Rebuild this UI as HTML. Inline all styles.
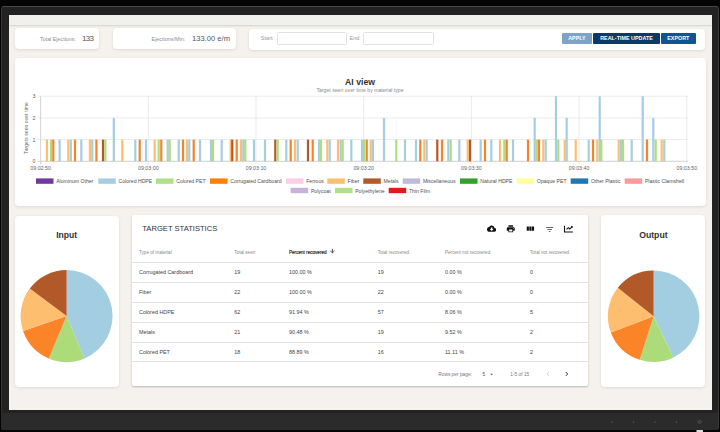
<!DOCTYPE html>
<html><head><meta charset="utf-8"><style>
html,body{margin:0;padding:0}
body{width:720px;height:432px;background:#050505;position:relative;overflow:hidden;font-family:"Liberation Sans",sans-serif}
.a{position:absolute}
.card{position:absolute;background:#fff;border-radius:4px;box-shadow:0 1px 3px rgba(60,50,40,.12)}
.t{position:absolute;white-space:nowrap;line-height:1}
.td{font-size:5.4px;color:#444}
.th{font-size:4.6px;color:#8a8a8a}
.th.act{color:#222;-webkit-text-stroke:0.15px #222}
.sep{position:absolute;left:131.5px;width:456px;height:0.7px;background:#e2e2e2}
svg text{font-family:"Liberation Sans",sans-serif}
</style></head><body>
<div class="a" style="left:0.8px;top:6.2px;width:718.2px;height:424px;background:#222;border-radius:3px;border-top:1.1px solid #4a4a4a;border-right:0.8px solid #3a3a3a;border-left:0.8px solid #333;box-sizing:border-box"></div>
<div class="a" style="left:1px;top:412.5px;width:717px;height:17.5px;background:#2b2b2b;border-radius:0 0 2px 2px"></div>
<div class="a" style="left:9px;top:14.6px;width:703px;height:395.6px;background:#f5f2ee"></div>
<div class="a" style="left:9px;top:14.6px;width:703px;height:10.6px;background:#f0f1ed;box-shadow:0 1.2px 2.2px rgba(0,0,0,.24)"></div>

<div class="card" style="left:15px;top:28px;width:84px;height:21px"></div>
<div class="t" style="left:40px;top:36.5px;font-size:5.35px;color:#8d8d8d">Total Ejections:</div>
<div class="t" style="left:82px;top:35.1px;font-size:8px;color:#555;letter-spacing:-0.75px">133</div>

<div class="card" style="left:112.7px;top:28px;width:123.5px;height:21px"></div>
<div class="t" style="left:151.5px;top:36.5px;font-size:5.45px;color:#8d8d8d">Ejections/Min:</div>
<div class="t" style="left:192px;top:35.3px;font-size:7.6px;color:#555">133.00 e/m</div>

<div class="card" style="left:249px;top:28.5px;width:455.7px;height:21px"></div>
<div class="t" style="left:260.8px;top:36.4px;font-size:5.6px;color:#9a9a9a">Start</div>
<div class="a" style="left:276.7px;top:32.2px;width:70px;height:12.6px;border:0.6px solid #e2e2e2;border-radius:1.5px;box-sizing:border-box"></div>
<div class="t" style="left:349.5px;top:36.4px;font-size:5.6px;color:#9a9a9a">End</div>
<div class="a" style="left:363px;top:32.2px;width:71px;height:12.6px;border:0.6px solid #e2e2e2;border-radius:1.5px;box-sizing:border-box"></div>
<div class="a" style="left:561.8px;top:33px;width:30.2px;height:10.6px;background:#7ca4c7;border-radius:1px"></div>
<div class="a" style="left:593px;top:33px;width:67px;height:10.6px;background:#0b3a66;border-radius:1px"></div>
<div class="a" style="left:661px;top:33px;width:34.7px;height:10.6px;background:#0f5594;border-radius:1px"></div>
<div class="t" style="left:561.8px;width:30.2px;text-align:center;top:35.6px;font-size:5.3px;color:#fff;font-weight:bold">APPLY</div>
<div class="t" style="left:593px;width:67px;text-align:center;top:35.6px;font-size:5.4px;color:#fff;font-weight:bold">REAL-TIME UPDATE</div>
<div class="t" style="left:661px;width:34.7px;text-align:center;top:35.6px;font-size:5.4px;color:#fff;font-weight:bold">EXPORT</div>

<div class="card" style="left:14.7px;top:57.5px;width:691.3px;height:148.5px"></div>
<div class="t" style="left:300px;width:120px;text-align:center;top:77.6px;font-size:8.7px;font-weight:bold;color:#333">AI view</div>
<div class="t" style="left:300px;width:120px;text-align:center;top:87.6px;font-size:5.15px;color:#8a8a8a">Target seen over time by material type</div>
<div class="t" style="left:26.6px;top:128.3px;font-size:5.13px;color:#666;transform:translate(-50%,-50%) rotate(-90deg)">Targets seen over time</div>
<svg class="a" style="left:0;top:0" width="720" height="432" viewBox="0 0 720 432">
<line x1="37.5" y1="161.30" x2="688" y2="161.30" stroke="#e3e3e3" stroke-width="0.7"/><line x1="37.5" y1="139.60" x2="688" y2="139.60" stroke="#e3e3e3" stroke-width="0.7"/><line x1="37.5" y1="117.90" x2="688" y2="117.90" stroke="#e3e3e3" stroke-width="0.7"/><line x1="37.5" y1="96.20" x2="688" y2="96.20" stroke="#e3e3e3" stroke-width="0.7"/><line x1="40.60" y1="96.20" x2="40.60" y2="164.30" stroke="#e3e3e3" stroke-width="0.7"/><line x1="148.30" y1="96.20" x2="148.30" y2="164.30" stroke="#e3e3e3" stroke-width="0.7"/><line x1="256.00" y1="96.20" x2="256.00" y2="164.30" stroke="#e3e3e3" stroke-width="0.7"/><line x1="363.70" y1="96.20" x2="363.70" y2="164.30" stroke="#e3e3e3" stroke-width="0.7"/><line x1="471.40" y1="96.20" x2="471.40" y2="164.30" stroke="#e3e3e3" stroke-width="0.7"/><line x1="579.10" y1="96.20" x2="579.10" y2="164.30" stroke="#e3e3e3" stroke-width="0.7"/><line x1="686.80" y1="96.20" x2="686.80" y2="164.30" stroke="#e3e3e3" stroke-width="0.7"/><line x1="40.6" y1="96.20" x2="40.6" y2="163.80" stroke="#cfcfcf" stroke-width="0.8"/><line x1="37.5" y1="161.3" x2="688" y2="161.3" stroke="#cfcfcf" stroke-width="0.8"/><rect x="45.80" y="139.60" width="2.2" height="21.70" fill="#fdbf6f"/><rect x="49.90" y="139.60" width="2.2" height="21.70" fill="#aedd80"/><rect x="52.20" y="139.60" width="2.2" height="21.70" fill="#f6832c"/><rect x="58.50" y="139.60" width="2.2" height="21.70" fill="#a6cee3"/><rect x="67.20" y="139.60" width="2.2" height="21.70" fill="#fdbf6f"/><rect x="69.70" y="139.60" width="2.2" height="21.70" fill="#a6cee3"/><rect x="73.90" y="139.60" width="2.2" height="21.70" fill="#f6832c"/><rect x="80.20" y="139.60" width="2.2" height="21.70" fill="#a6cee3"/><rect x="88.80" y="139.60" width="2.2" height="21.70" fill="#fdbf6f"/><rect x="91.20" y="139.60" width="2.2" height="21.70" fill="#a6cee3"/><rect x="95.30" y="139.60" width="2.2" height="21.70" fill="#f6832c"/><rect x="101.90" y="139.60" width="2.2" height="21.70" fill="#b15928"/><rect x="104.20" y="139.60" width="2.2" height="21.70" fill="#aedd80"/><rect x="112.70" y="117.90" width="2.2" height="43.40" fill="#a6cee3"/><rect x="121.20" y="139.60" width="2.2" height="21.70" fill="#fdbf6f"/><rect x="134.20" y="139.60" width="2.2" height="21.70" fill="#a6cee3"/><rect x="138.60" y="139.60" width="2.2" height="21.70" fill="#f6832c"/><rect x="144.90" y="139.60" width="2.2" height="21.70" fill="#a6cee3"/><rect x="153.60" y="139.60" width="2.2" height="21.70" fill="#fdbf6f"/><rect x="157.60" y="139.60" width="2.2" height="21.70" fill="#aedd80"/><rect x="160.20" y="139.60" width="2.2" height="21.70" fill="#f6832c"/><rect x="166.60" y="139.60" width="2.2" height="21.70" fill="#a6cee3"/><rect x="168.60" y="139.60" width="2.2" height="21.70" fill="#aedd80"/><rect x="177.60" y="139.60" width="2.2" height="21.70" fill="#a6cee3"/><rect x="181.90" y="139.60" width="2.2" height="21.70" fill="#f6832c"/><rect x="185.90" y="139.60" width="2.2" height="21.70" fill="#fdbf6f"/><rect x="188.20" y="139.60" width="2.2" height="21.70" fill="#a6cee3"/><rect x="192.60" y="139.60" width="2.2" height="21.70" fill="#f6832c"/><rect x="198.90" y="139.60" width="2.2" height="21.70" fill="#a6cee3"/><rect x="209.90" y="139.60" width="2.2" height="21.70" fill="#a6cee3"/><rect x="211.90" y="139.60" width="2.2" height="21.70" fill="#aedd80"/><rect x="220.60" y="139.60" width="2.2" height="21.70" fill="#a6cee3"/><rect x="229.60" y="139.60" width="2.2" height="21.70" fill="#fdbf6f"/><rect x="231.20" y="139.60" width="2.2" height="21.70" fill="#b15928"/><rect x="235.60" y="139.60" width="2.2" height="21.70" fill="#f6832c"/><rect x="239.90" y="139.60" width="2.2" height="21.70" fill="#fdbf6f"/><rect x="242.20" y="139.60" width="2.2" height="21.70" fill="#a6cee3"/><rect x="244.20" y="139.60" width="2.2" height="21.70" fill="#aedd80"/><rect x="252.90" y="139.60" width="2.2" height="21.70" fill="#a6cee3"/><rect x="263.90" y="139.60" width="2.2" height="21.70" fill="#a6cee3"/><rect x="274.20" y="139.60" width="2.2" height="21.70" fill="#b15928"/><rect x="276.60" y="139.60" width="2.2" height="21.70" fill="#aedd80"/><rect x="285.20" y="139.60" width="2.2" height="21.70" fill="#a6cee3"/><rect x="289.60" y="139.60" width="2.2" height="21.70" fill="#f6832c"/><rect x="293.90" y="139.60" width="2.2" height="21.70" fill="#fdbf6f"/><rect x="296.60" y="139.60" width="2.2" height="21.70" fill="#a6cee3"/><rect x="306.90" y="139.60" width="2.2" height="21.70" fill="#b15928"/><rect x="311.60" y="139.60" width="2.2" height="21.70" fill="#f6832c"/><rect x="317.90" y="139.60" width="2.2" height="21.70" fill="#a6cee3"/><rect x="319.90" y="139.60" width="2.2" height="21.70" fill="#aedd80"/><rect x="326.20" y="139.60" width="2.2" height="21.70" fill="#fdbf6f"/><rect x="328.60" y="139.60" width="2.2" height="21.70" fill="#a6cee3"/><rect x="336.90" y="139.60" width="2.2" height="21.70" fill="#fdbf6f"/><rect x="339.60" y="139.60" width="2.2" height="21.70" fill="#a6cee3"/><rect x="341.60" y="139.60" width="2.2" height="21.70" fill="#aedd80"/><rect x="350.20" y="139.60" width="2.2" height="21.70" fill="#a6cee3"/><rect x="360.90" y="139.60" width="2.2" height="21.70" fill="#a6cee3"/><rect x="362.90" y="139.60" width="2.2" height="21.70" fill="#aedd80"/><rect x="365.60" y="139.60" width="2.2" height="21.70" fill="#f6832c"/><rect x="369.60" y="139.60" width="2.2" height="21.70" fill="#fdbf6f"/><rect x="371.90" y="139.60" width="2.2" height="21.70" fill="#a6cee3"/><rect x="382.90" y="117.90" width="2.2" height="43.40" fill="#a6cee3"/><rect x="395.20" y="139.60" width="2.2" height="21.70" fill="#aedd80"/><rect x="403.90" y="139.60" width="2.2" height="21.70" fill="#a6cee3"/><rect x="414.90" y="139.60" width="2.2" height="21.70" fill="#a6cee3"/><rect x="419.20" y="139.60" width="2.2" height="21.70" fill="#f6832c"/><rect x="423.20" y="139.60" width="2.2" height="21.70" fill="#fdbf6f"/><rect x="425.60" y="139.60" width="2.2" height="21.70" fill="#a6cee3"/><rect x="436.20" y="139.60" width="2.2" height="21.70" fill="#b15928"/><rect x="440.90" y="139.60" width="2.2" height="21.70" fill="#f6832c"/><rect x="447.20" y="139.60" width="2.2" height="21.70" fill="#a6cee3"/><rect x="449.60" y="139.60" width="2.2" height="21.70" fill="#aedd80"/><rect x="458.20" y="139.60" width="2.2" height="21.70" fill="#a6cee3"/><rect x="466.60" y="139.60" width="2.2" height="21.70" fill="#fdbf6f"/><rect x="468.90" y="139.60" width="2.2" height="21.70" fill="#b15928"/><rect x="479.60" y="139.60" width="2.2" height="21.70" fill="#a6cee3"/><rect x="483.90" y="139.60" width="2.2" height="21.70" fill="#f6832c"/><rect x="490.20" y="139.60" width="2.2" height="21.70" fill="#a6cee3"/><rect x="498.90" y="139.60" width="2.2" height="21.70" fill="#fdbf6f"/><rect x="503.20" y="139.60" width="2.2" height="21.70" fill="#aedd80"/><rect x="505.60" y="139.60" width="2.2" height="21.70" fill="#f6832c"/><rect x="511.90" y="139.60" width="2.2" height="21.70" fill="#a6cee3"/><rect x="526.90" y="139.60" width="2.2" height="21.70" fill="#f6832c"/><rect x="533.60" y="117.90" width="2.2" height="43.40" fill="#a6cee3"/><rect x="535.60" y="139.60" width="2.2" height="21.70" fill="#aedd80"/><rect x="537.90" y="139.60" width="2.2" height="21.70" fill="#f6832c"/><rect x="542.20" y="139.60" width="2.2" height="21.70" fill="#fdbf6f"/><rect x="544.60" y="139.60" width="2.2" height="21.70" fill="#a6cee3"/><rect x="554.90" y="96.20" width="2.2" height="65.10" fill="#a6cee3"/><rect x="557.20" y="139.60" width="2.2" height="21.70" fill="#aedd80"/><rect x="563.60" y="139.60" width="2.2" height="21.70" fill="#fdbf6f"/><rect x="565.60" y="117.90" width="2.2" height="43.40" fill="#a6cee3"/><rect x="574.60" y="139.60" width="2.2" height="21.70" fill="#fdbf6f"/><rect x="587.60" y="139.60" width="2.2" height="21.70" fill="#a6cee3"/><rect x="591.90" y="139.60" width="2.2" height="21.70" fill="#f6832c"/><rect x="596.20" y="139.60" width="2.2" height="21.70" fill="#fdbf6f"/><rect x="598.60" y="96.20" width="2.2" height="65.10" fill="#a6cee3"/><rect x="600.20" y="139.60" width="2.2" height="21.70" fill="#aedd80"/><rect x="617.60" y="139.60" width="2.2" height="21.70" fill="#fdbf6f"/><rect x="619.90" y="139.60" width="2.2" height="21.70" fill="#a6cee3"/><rect x="621.90" y="139.60" width="2.2" height="21.70" fill="#aedd80"/><rect x="630.60" y="139.60" width="2.2" height="21.70" fill="#a6cee3"/><rect x="641.60" y="96.20" width="2.2" height="65.10" fill="#a6cee3"/><rect x="645.90" y="139.60" width="2.2" height="21.70" fill="#f6832c"/><rect x="652.20" y="117.90" width="2.2" height="43.40" fill="#a6cee3"/><rect x="654.60" y="139.60" width="2.2" height="21.70" fill="#aedd80"/><rect x="660.60" y="139.60" width="2.2" height="21.70" fill="#fdbf6f"/><rect x="663.20" y="139.60" width="2.2" height="21.70" fill="#a6cee3"/>
<g font-size="5.3" fill="#666"><text x="35.5" y="163.20" text-anchor="end">0</text><text x="35.5" y="141.50" text-anchor="end">1</text><text x="35.5" y="119.80" text-anchor="end">2</text><text x="35.5" y="98.10" text-anchor="end">3</text><text x="40.60" y="170" text-anchor="middle">09:02:50</text><text x="148.30" y="170" text-anchor="middle">09:03:00</text><text x="256.00" y="170" text-anchor="middle">09:03:10</text><text x="363.70" y="170" text-anchor="middle">09:03:20</text><text x="471.40" y="170" text-anchor="middle">09:03:30</text><text x="579.10" y="170" text-anchor="middle">09:03:40</text><text x="686.80" y="170" text-anchor="middle">09:03:50</text></g>
<g font-size="5.15" fill="#4f4f4f"><rect x="36" y="178.4" width="17.5" height="5.4" fill="#7039a0"/><text x="56.20" y="183.10">Aluminum Other</text><rect x="98.3" y="178.4" width="17.5" height="5.4" fill="#a6cee3"/><text x="118.50" y="183.10">Colored HDPE</text><rect x="156" y="178.4" width="17.5" height="5.4" fill="#b2df8a"/><text x="176.20" y="183.10">Colored PET</text><rect x="210" y="178.4" width="17.5" height="5.4" fill="#ff7f00"/><text x="230.20" y="183.10">Corrugated Cardboard</text><rect x="286" y="178.4" width="17.5" height="5.4" fill="#fccde5"/><text x="306.20" y="183.10">Ferrous</text><rect x="327.3" y="178.4" width="17.5" height="5.4" fill="#fdbf6f"/><text x="347.50" y="183.10">Fiber</text><rect x="363.3" y="178.4" width="17.5" height="5.4" fill="#b15928"/><text x="383.50" y="183.10">Metals</text><rect x="402.7" y="178.4" width="17.5" height="5.4" fill="#bebada"/><text x="422.90" y="183.10">Miscellaneous</text><rect x="460" y="178.4" width="17.5" height="5.4" fill="#33a02c"/><text x="480.20" y="183.10">Natural HDPE</text><rect x="516.7" y="178.4" width="17.5" height="5.4" fill="#ffff99"/><text x="536.90" y="183.10">Opaque PET</text><rect x="570.7" y="178.4" width="17.5" height="5.4" fill="#1f78b4"/><text x="590.90" y="183.10">Other Plastic</text><rect x="624.7" y="178.4" width="17.5" height="5.4" fill="#fb9a99"/><text x="644.90" y="183.10">Plastic Clamshell</text><rect x="290.7" y="187.8" width="17.5" height="5.4" fill="#cab2d6"/><text x="310.90" y="192.50">Polycoat</text><rect x="335" y="187.8" width="17.5" height="5.4" fill="#b2df8a"/><text x="355.20" y="192.50">Polyethylene</text><rect x="388.7" y="187.8" width="17.5" height="5.4" fill="#e31a1c"/><text x="408.90" y="192.50">Thin Film</text></g>
</svg>

<div class="card" style="left:14.7px;top:215.5px;width:104px;height:171px"></div>
<div class="t" style="left:14.7px;width:104px;text-align:center;top:230.5px;font-size:8.6px;font-weight:bold;color:#333">Input</div>
<div class="card" style="left:601.4px;top:215px;width:104px;height:172.3px"></div>
<div class="t" style="left:601.4px;width:104px;text-align:center;top:230.9px;font-size:8.7px;font-weight:bold;color:#333">Output</div>
<svg class="a" style="left:0;top:0" width="720" height="432"><path d="M66.6,316 L66.60,270.00 A46,46 0 0 1 84.44,358.40 Z" fill="#a3cde1"/><path d="M66.6,316 L84.44,358.40 A46,46 0 0 1 48.76,358.40 Z" fill="#acdc7a"/><path d="M66.6,316 L48.76,358.40 A46,46 0 0 1 23.11,330.99 Z" fill="#fb8429"/><path d="M66.6,316 L23.11,330.99 A46,46 0 0 1 29.75,288.47 Z" fill="#fdbf6f"/><path d="M66.6,316 L29.75,288.47 A46,46 0 0 1 66.60,270.00 Z" fill="#b15928"/><path d="M653.6,316.2 L653.60,270.40 A45.8,45.8 0 0 1 673.47,357.46 Z" fill="#a3cde1"/><path d="M653.6,316.2 L673.47,357.46 A45.8,45.8 0 0 1 639.76,359.86 Z" fill="#acdc7a"/><path d="M653.6,316.2 L639.76,359.86 A45.8,45.8 0 0 1 610.84,332.60 Z" fill="#fb8429"/><path d="M653.6,316.2 L610.84,332.60 A45.8,45.8 0 0 1 617.79,287.64 Z" fill="#fdbf6f"/><path d="M653.6,316.2 L617.79,287.64 A45.8,45.8 0 0 1 653.60,270.40 Z" fill="#b15928"/></svg>

<div class="a" style="left:131.5px;top:215px;width:456px;height:170.7px;background:#fff;border-radius:2px;box-shadow:0 1px 2px rgba(0,0,0,.25)"></div>
<div class="t" style="left:142.3px;top:225px;font-size:7.6px;color:#333">TARGET STATISTICS</div>
<div class="t th" style="left:139px;top:251.4px">Type of material</div><div class="t th" style="left:234.3px;top:251.4px">Total seen</div><div class="t th act" style="left:289px;top:251.4px">Percent recovered</div><div class="t th" style="left:377.7px;top:251.4px">Total recovered</div><div class="t th" style="left:445px;top:251.4px">Percent not recovered</div><div class="t th" style="left:530px;top:251.4px">Total not recovered</div>
<div class="sep" style="top:262.30px"></div><div class="sep" style="top:282.10px"></div><div class="sep" style="top:301.90px"></div><div class="sep" style="top:321.70px"></div><div class="sep" style="top:341.50px"></div><div class="sep" style="top:361.30px"></div>
<div class="t td" style="left:139px;top:270.00px">Corrugated Cardboard</div><div class="t td" style="left:234.3px;top:270.00px">19</div><div class="t td" style="left:289px;top:270.00px">100.00 %</div><div class="t td" style="left:377.7px;top:270.00px">19</div><div class="t td" style="left:445px;top:270.00px">0.00 %</div><div class="t td" style="left:530px;top:270.00px">0</div><div class="t td" style="left:139px;top:289.90px">Fiber</div><div class="t td" style="left:234.3px;top:289.90px">22</div><div class="t td" style="left:289px;top:289.90px">100.00 %</div><div class="t td" style="left:377.7px;top:289.90px">22</div><div class="t td" style="left:445px;top:289.90px">0.00 %</div><div class="t td" style="left:530px;top:289.90px">0</div><div class="t td" style="left:139px;top:309.80px">Colored HDPE</div><div class="t td" style="left:234.3px;top:309.80px">62</div><div class="t td" style="left:289px;top:309.80px">91.94 %</div><div class="t td" style="left:377.7px;top:309.80px">57</div><div class="t td" style="left:445px;top:309.80px">8.06 %</div><div class="t td" style="left:530px;top:309.80px">5</div><div class="t td" style="left:139px;top:329.70px">Metals</div><div class="t td" style="left:234.3px;top:329.70px">21</div><div class="t td" style="left:289px;top:329.70px">90.48 %</div><div class="t td" style="left:377.7px;top:329.70px">19</div><div class="t td" style="left:445px;top:329.70px">9.52 %</div><div class="t td" style="left:530px;top:329.70px">2</div><div class="t td" style="left:139px;top:349.60px">Colored PET</div><div class="t td" style="left:234.3px;top:349.60px">18</div><div class="t td" style="left:289px;top:349.60px">88.89 %</div><div class="t td" style="left:377.7px;top:349.60px">16</div><div class="t td" style="left:445px;top:349.60px">11.11 %</div><div class="t td" style="left:530px;top:349.60px">2</div>
<div class="t" style="left:438.3px;top:373.1px;font-size:4.8px;color:#777">Rows per page:</div>
<div class="t" style="left:482.6px;top:373.1px;font-size:4.8px;color:#555">5</div>
<div class="t" style="left:510.3px;top:373.1px;font-size:4.8px;color:#777">1-5 of 15</div>

<svg class="a" style="left:486.7px;top:224.15px" width="9.3" height="9.3" viewBox="0 0 24 24"><path fill="#111" d="M19.35 10.04C18.67 6.59 15.64 4 12 4 9.11 4 6.6 5.64 5.35 8.04 2.34 8.36 0 10.91 0 14c0 3.31 2.69 6 6 6h13c2.76 0 5-2.240 5-5 0-2.64-2.05-4.78-4.65-4.96zM17 13l-5 5-5-5h3V9h4v4h3z"/></svg>
<svg class="a" style="left:506px;top:224.2px" width="9.5" height="9.5" viewBox="0 0 24 24"><path fill="#111" d="M19 8H5c-1.66 0-3 1.34-3 3v6h4v4h12v-4h4v-6c0-1.66-1.34-3-3-3zm-3 11H8v-5h8v5zm3-7c-.55 0-1-.45-1-1s.45-1 1-1 1 .45 1 1-.45 1-1 1zm-1-9H6v4h12V3z"/></svg>
<svg class="a" style="left:524.8px;top:225.4px" width="10.4" height="7.6" viewBox="0 0 24 24" preserveAspectRatio="none"><path fill="#111" d="M10 18h5V5h-5v13zm-6 0h5V5H4v13zM16 5v13h5V5h-5z"/></svg>
<svg class="a" style="left:544.9px;top:224.5px" width="9.3" height="9.3" viewBox="0 0 24 24"><path fill="#333" d="M10 18h4v-2h-4v2zM3 6v2h18V6H3zm3 7h12v-2H6v2z"/></svg>
<svg class="a" style="left:0;top:0" width="720" height="432"><path d="M564.5 225.8 V232 H572.9" fill="none" stroke="#111" stroke-width="1.1"/><path d="M566.5 229.3 L568.3 227.6 L569.8 229 L571.6 227.2" fill="none" stroke="#111" stroke-width="1.05"/><circle cx="571.9" cy="227" r="1.05" fill="#111"/>
<path d="M332.4 248.9 V252.6" stroke="#333" stroke-width="0.9"/><path d="M330.3 250.8 L332.4 252.9 L334.5 250.8" fill="none" stroke="#333" stroke-width="0.8"/>
<path d="M490.3 373.7 H493.1 L491.7 375.3 Z" fill="#555"/>
<path d="M548.7 372.2 L547.3 374 L548.7 375.8" fill="none" stroke="#bbb" stroke-width="0.7"/>
<path d="M565.9 372.1 L567.6 374 L565.9 375.9" fill="none" stroke="#222" stroke-width="0.9"/>
<circle cx="612.2" cy="421.9" r="0.5" fill="#888"/><circle cx="633.3" cy="421.9" r="0.5" fill="#888"/><circle cx="655" cy="421.9" r="0.5" fill="#888"/><circle cx="676.4" cy="421.9" r="0.5" fill="#888"/>
<circle cx="699.6" cy="421.9" r="1.5" fill="none" stroke="#777" stroke-width="0.5"/>
<rect x="696.5" y="430" width="6.5" height="2" fill="#ddd"/>
</svg>
</body></html>
